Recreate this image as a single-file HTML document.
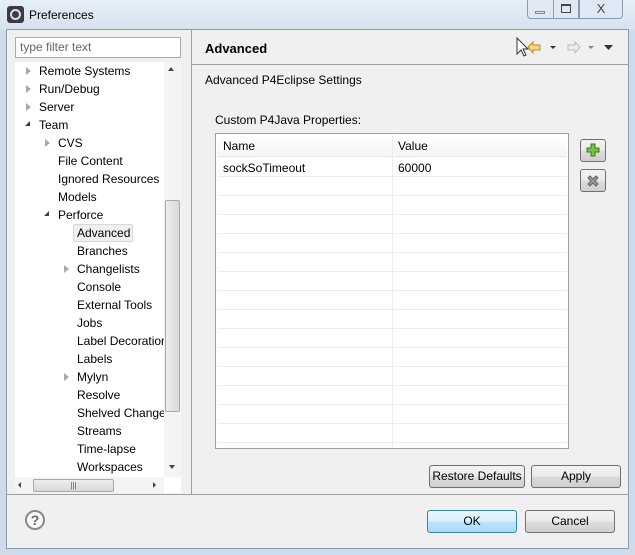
<!DOCTYPE html><html><head><style>
*{box-sizing:border-box}
body{margin:0;width:635px;height:555px;overflow:hidden;font-family:"Liberation Sans",sans-serif;font-size:12px;color:#000;background:#cfdbe8;position:relative}
.a{position:absolute}
.t{position:absolute;white-space:nowrap;line-height:14px}
.btn{position:absolute;border:1px solid #707070;border-radius:3px;background:linear-gradient(#f2f2f2,#ebebeb 50%,#dddddd 50%,#cfcfcf);text-align:center;line-height:20px}
.row{position:absolute;left:2px;width:349px;height:1px;background:#ececec}
.tri{position:absolute;width:0;height:0;border-top:4px solid transparent;border-bottom:4px solid transparent;border-left:5px solid #a8a8a8}
.tri2{position:absolute;width:0;height:0;border-left:5px solid transparent;border-bottom:5px solid #404040}
</style></head><body>
<div class="a" style="left:0;top:0;width:635px;height:30px;background:linear-gradient(#e6eef7,#d6e2ee)"></div>
<div class="a" style="left:7px;top:6px;width:17px;height:17px;border-radius:3px;background:#3a3a4a"></div>
<div class="a" style="left:10px;top:9px;width:11px;height:11px;border-radius:50%;border:2px solid #ddd"></div>
<div class="t" style="left:29px;top:8px">Preferences</div>
<div class="a" style="left:527px;top:0;width:27px;height:19px;border:1px solid #8a9bb0;border-top:none;border-radius:0 0 0 4px;background:#e0e9f3"></div>
<div class="a" style="left:535px;top:11px;width:10px;height:3px;border:1px solid #888"></div>
<div class="a" style="left:553px;top:0;width:26px;height:19px;border:1px solid #8a9bb0;border-top:none;background:#e0e9f3"></div>
<div class="a" style="left:561px;top:4px;width:10px;height:9px;border:1px solid #444;border-top-width:2px"></div>
<div class="a" style="left:579px;top:0;width:44px;height:19px;border:1px solid #8a9bb0;border-top:none;border-radius:0 0 4px 0;background:#e0e9f3;text-align:center;font-size:13px;color:#444;line-height:17px">X</div>
<div class="a" style="left:6px;top:29px;width:623px;height:520px;background:#f0f0f0;border:1px solid #8a9bb0"></div>
<div class="a" style="left:191px;top:30px;width:1px;height:464px;background:#a0a0a0"></div>
<div class="a" style="left:192px;top:64px;width:436px;height:1px;background:#a0a0a0"></div>
<div class="a" style="left:7px;top:494px;width:621px;height:1px;background:#a0a0a0"></div>
<div class="a" style="left:15px;top:37px;width:166px;height:21px;border:1px solid #aaa;background:#fff"></div>
<div class="t" style="left:20px;top:40px;color:#666">type filter text</div>
<div class="a" style="left:15px;top:62px;width:166px;height:431px;background:#fff"></div>
<div class="a" style="left:164px;top:62px;width:17px;height:415px;background:#f4f4f4"></div>
<div class="a" style="left:165px;top:200px;width:15px;height:212px;border:1px solid #a9a9a9;border-radius:2px;background:linear-gradient(90deg,#eee,#d8d8d8)"></div>
<div class="tri2" style="left:138px;top:67px;border-left:3px solid transparent;border-right:3px solid transparent;border-bottom:4px solid #444;transform:translateX(30px)"></div>
<div class="a" style="left:169px;top:465px;border-left:3px solid transparent;border-right:3px solid transparent;border-top:4px solid #444"></div>
<div class="a" style="left:15px;top:477px;width:149px;height:16px;background:#f4f4f4"></div>
<div class="a" style="left:33px;top:479px;width:81px;height:13px;border:1px solid #a9a9a9;border-radius:2px;background:linear-gradient(#eee,#d8d8d8);text-align:center;font-size:8px;line-height:11px;color:#555">|||</div>
<div class="a" style="left:18px;top:482px;border-top:3px solid transparent;border-bottom:3px solid transparent;border-right:3px solid #444"></div>
<div class="a" style="left:153px;top:482px;border-top:3px solid transparent;border-bottom:3px solid transparent;border-left:3px solid #444"></div>
<div class="a" style="left:15px;top:62px;width:149px;height:415px;overflow:hidden">
<div class="tri" style="left:11px;top:5px"></div><div class="t" style="left:24px;top:2px">Remote Systems</div>
<div class="tri" style="left:11px;top:23px"></div><div class="t" style="left:24px;top:20px">Run/Debug</div>
<div class="tri" style="left:11px;top:41px"></div><div class="t" style="left:24px;top:38px">Server</div>
<div class="tri2" style="left:10px;top:59px"></div><div class="t" style="left:24px;top:56px">Team</div>
<div class="tri" style="left:30px;top:77px"></div><div class="t" style="left:43px;top:74px">CVS</div>
<div class="t" style="left:43px;top:92px">File Content</div>
<div class="t" style="left:43px;top:110px">Ignored Resources</div>
<div class="t" style="left:43px;top:128px">Models</div>
<div class="tri2" style="left:29px;top:149px"></div><div class="t" style="left:43px;top:146px">Perforce</div>
<div class="a" style="left:58px;top:162px;width:60px;height:18px;border:1px solid #d8d8d8;border-radius:2px;background:#f0f0f0"></div>
<div class="t" style="left:62px;top:164px">Advanced</div>
<div class="t" style="left:62px;top:182px">Branches</div>
<div class="tri" style="left:49px;top:203px"></div><div class="t" style="left:62px;top:200px">Changelists</div>
<div class="t" style="left:62px;top:218px">Console</div>
<div class="t" style="left:62px;top:236px">External Tools</div>
<div class="t" style="left:62px;top:254px">Jobs</div>
<div class="t" style="left:62px;top:272px">Label Decorations</div>
<div class="t" style="left:62px;top:290px">Labels</div>
<div class="tri" style="left:49px;top:311px"></div><div class="t" style="left:62px;top:308px">Mylyn</div>
<div class="t" style="left:62px;top:326px">Resolve</div>
<div class="t" style="left:62px;top:344px">Shelved Changes</div>
<div class="t" style="left:62px;top:362px">Streams</div>
<div class="t" style="left:62px;top:380px">Time-lapse</div>
<div class="t" style="left:62px;top:398px">Workspaces</div>
</div>
<div class="t" style="left:205px;top:42px;font-weight:bold;font-size:13px">Advanced</div>
<svg class="a" style="left:516px;top:37px" width="110" height="22"><path d="M1 1v16l4-4 3 6 2-1-3-6h5z" fill="#fff" stroke="#333"/><path d="M12 10l5-5v3h7v5h-7v3z" fill="#f7d77a" stroke="#c08a20"/><path d="M34 9h6l-3 3z" fill="#333"/><path d="M64 10l-5-5v3h-7v5h7v3z" fill="#eee" stroke="#bbb"/><path d="M72 9h6l-3 3z" fill="#888"/><path d="M88 8h9l-4.5 5z" fill="#333"/></svg>
<div class="t" style="left:205px;top:73px">Advanced P4Eclipse Settings</div>
<div class="t" style="left:215px;top:113px">Custom P4Java Properties:</div>
<div class="a" style="left:215px;top:133px;width:354px;height:316px;border:1px solid #a0a0a0;background:#fff">
<div class="a" style="left:1px;top:1px;width:350px;height:22px;background:linear-gradient(#fff,#f4f5f7);border-bottom:1px solid #e5e5e5"></div>
<div class="a" style="left:176px;top:1px;width:1px;height:312px;background:#ececec"></div>
<div class="t" style="left:7px;top:5px">Name</div><div class="t" style="left:182px;top:5px">Value</div>
<div class="t" style="left:7px;top:27px">sockSoTimeout</div><div class="t" style="left:182px;top:27px">60000</div>
<div class="row" style="top:42px"></div><div class="row" style="top:61px"></div><div class="row" style="top:80px"></div><div class="row" style="top:99px"></div><div class="row" style="top:118px"></div><div class="row" style="top:137px"></div><div class="row" style="top:156px"></div><div class="row" style="top:175px"></div><div class="row" style="top:194px"></div><div class="row" style="top:213px"></div><div class="row" style="top:232px"></div><div class="row" style="top:251px"></div><div class="row" style="top:270px"></div><div class="row" style="top:289px"></div><div class="row" style="top:308px"></div>
</div>
<div class="btn" style="left:580px;top:139px;width:26px;height:23px"></div>
<svg class="a" style="left:586px;top:143px" width="14" height="14"><path d="M5 1h4v4h4v4h-4v4h-4v-4h-4v-4h4z" fill="#7cc04a" stroke="#3d7a1e"/></svg>
<div class="btn" style="left:580px;top:169px;width:26px;height:23px"></div>
<svg class="a" style="left:586px;top:174px" width="14" height="14"><path d="M2 4l2-2 3 3 3-3 2 2-3 3 3 3-2 2-3-3-3 3-2-2 3-3z" fill="#999" stroke="#666"/></svg>
<div class="btn" style="left:429px;top:465px;width:96px;height:23px">Restore Defaults</div>
<div class="btn" style="left:531px;top:465px;width:90px;height:23px">Apply</div>
<div class="a" style="left:25px;top:510px;width:20px;height:20px;border-radius:50%;border:2px solid #8a8a8a;background:#fafafa;text-align:center;font-weight:bold;font-size:14px;line-height:16px;color:#666">?</div>
<div class="btn" style="left:427px;top:510px;width:90px;height:23px;border-color:#3c7fb1;background:linear-gradient(#eaf6fd,#d9f0fc 50%,#bee6fd 50%,#a7d9f5)">OK</div>
<div class="btn" style="left:525px;top:510px;width:90px;height:23px">Cancel</div>
</body></html>
